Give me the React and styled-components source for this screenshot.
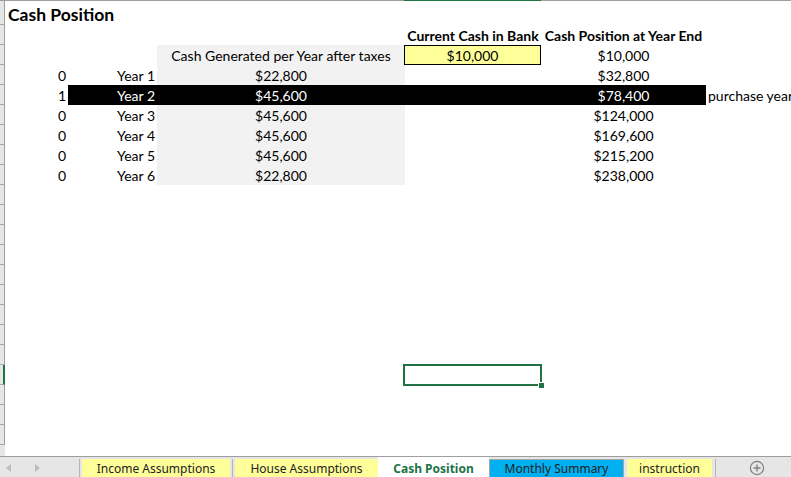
import React from 'react';
import styled, { createGlobalStyle, css } from 'styled-components';

const CELL_FONT = `Lato, "Liberation Sans", Arial, sans-serif`;
const UI_FONT = `"Noto Sans", "Open Sans", "Liberation Sans", sans-serif`;
const GREEN = '#217346';

const Global = createGlobalStyle`
  html, body { margin: 0; padding: 0; background: #fff; overflow: hidden; }
  #root { width: 791px; height: 477px; }
`;

const Window = styled.div`
  width: 791px;
  height: 477px;
  display: flex;
  flex-direction: column;
  overflow: hidden;
  background: #fff;
`;

const HeaderEdge = styled.div`
  display: flex;
  height: 1px;
  flex: none;
`;

const EdgeSeg = styled.div`
  background: ${(p) => (p.$active ? GREEN : '#9e9e9e')};
  ${(p) => (p.$w ? css`width: ${p.$w}px; flex: none;` : css`flex: 1;`)}
`;

const Body = styled.div`
  flex: 1;
  display: flex;
  min-height: 0;
`;

const RowHeads = styled.div`
  width: 5px;
  flex: none;
  display: flex;
  flex-direction: column;
  background: #e6e6e6;
`;

const RowHead = styled.div`
  height: ${(p) => p.$h}px;
  flex: none;
  box-sizing: border-box;
  border-bottom: 1px solid #a8a8a8;
  border-right: ${(p) => (p.$sel ? `2px solid ${GREEN}` : '1px solid #9e9e9e')};
`;

const Sheet = styled.div`
  flex: 1;
  display: grid;
  grid-template-columns: 63px 89px 248px 136px 165px 1fr;
  grid-template-rows: 24px repeat(21, 20px);
  align-content: start;
  overflow: hidden;
  font-family: ${CELL_FONT};
  font-size: 14px;
  color: #000;
`;

const Cell = styled.div`
  grid-column: ${(p) => p.$col};
  grid-row: ${(p) => p.$row};
  display: flex;
  align-items: center;
  justify-content: ${(p) => (p.$align === 'right' ? 'flex-end' : p.$align === 'left' ? 'flex-start' : 'center')};
  padding: 1px 2px 0;
  box-sizing: border-box;
  white-space: nowrap;
  background: ${(p) => p.$bg || 'transparent'};
  color: ${(p) => p.$color || '#000'};
  font-weight: ${(p) => (p.$bold ? 700 : 400)};
  min-width: 0;
  overflow: visible;
`;

const Title = styled.div`
  grid-column: 1 / 4;
  grid-row: 1;
  display: flex;
  align-items: center;
  padding: 2px 3px 0;
  font-weight: 700;
  font-size: 17.5px;
  white-space: nowrap;
`;

const InputCell = styled(Cell)`
  background: #ffff99;
  border: 1px solid #000;
  margin-left: -1px;
`;

const Selected = styled.div`
  grid-column: 4;
  grid-row: 19;
  position: relative;
  &::before {
    content: '';
    position: absolute;
    left: -2px;
    top: -1px;
    right: -1px;
    bottom: -1px;
    border: 2px solid ${GREEN};
  }
  &::after {
    content: '';
    position: absolute;
    right: -3px;
    bottom: -3px;
    width: 5px;
    height: 5px;
    background: ${GREEN};
    box-shadow: -1px -1px 0 #fff;
  }
`;

const TabBar = styled.div`
  height: 20px;
  flex: none;
  display: flex;
  align-items: flex-end;
  background: #e6e6e6;
  border-top: 1px solid #9e9e9e;
  font-family: ${UI_FONT};
  font-size: 12px;
`;

const Nav = styled.div`
  width: 79px;
  height: 18px;
  flex: none;
  display: flex;
  align-items: center;
  padding-left: 6px;
  gap: 24px;
  box-sizing: border-box;
`;

const Divider = styled.div`
  width: 1px;
  height: 18px;
  flex: none;
  background: #b4b4b4;
  margin: 0 ${(p) => p.$mr || 2}px 0 ${(p) => p.$ml || 0}px;
`;

const Tab = styled.div`
  width: ${(p) => p.$w}px;
  height: ${(p) => (p.$active ? 20 : 18)}px;
  flex: none;
  box-sizing: border-box;
  display: flex;
  align-items: center;
  justify-content: center;
  padding-top: ${(p) => (p.$active ? 3 : 1)}px;
  background: ${(p) => p.$bg};
  color: ${(p) => (p.$active ? GREEN : '#222')};
  font-weight: ${(p) => (p.$active ? 700 : 400)};
  margin-right: ${(p) => p.$mr || 0}px;
  ${(p) =>
    p.$boxed &&
    css`
      border-top: 1px solid #a6a6a6;
      border-left: 1px solid #a6a6a6;
      border-right: 1px solid #a6a6a6;
      padding-top: 0;
    `}
  white-space: nowrap;
`;

const PlusWrap = styled.div`
  height: 18px;
  display: flex;
  align-items: center;
  margin-left: 31px;
`;

const Arrow = ({ dir }) => (
  <svg width="5" height="8" viewBox="0 0 5 8">
    <polygon points={dir === 'left' ? '5,0 5,8 0,4' : '0,0 0,8 5,4'} fill="#bdbdbd" />
  </svg>
);

const PlusIcon = () => (
  <svg width="16" height="16" viewBox="0 0 16 16">
    <circle cx="8" cy="8" r="6.6" fill="none" stroke="#7f7f7f" strokeWidth="1.2" />
    <path d="M8 4.5v7M4.5 8h7" stroke="#7f7f7f" strokeWidth="1.4" />
  </svg>
);

const rows = [
  { a: '0', b: 'Year 1', c: '$22,800', e: '$32,800' },
  { a: '1', b: 'Year 2', c: '$45,600', e: '$78,400', dark: true, f: 'purchase year' },
  { a: '0', b: 'Year 3', c: '$45,600', e: '$124,000' },
  { a: '0', b: 'Year 4', c: '$45,600', e: '$169,600' },
  { a: '0', b: 'Year 5', c: '$45,600', e: '$215,200' },
  { a: '0', b: 'Year 6', c: '$22,800', e: '$238,000' },
];

export default function App() {
  const heads = [24, ...Array(21).fill(20)];
  return (
    <Window>
      <Global />
      <HeaderEdge>
        <EdgeSeg $w={404} />
        <EdgeSeg $w={137} $active />
        <EdgeSeg />
      </HeaderEdge>
      <Body>
        <RowHeads>
          {heads.map((h, i) => (
            <RowHead key={i} $h={h} $sel={i === 18} />
          ))}
        </RowHeads>
        <Sheet>
          <Title>Cash Position</Title>
          <Cell $col={4} $row={2} $bold>Current Cash in Bank</Cell>
          <Cell $col={5} $row={2} $bold>Cash Position at Year End</Cell>
          <Cell $col={3} $row={3} $bg="#f2f2f2">Cash Generated per Year after taxes</Cell>
          <InputCell $col={4} $row={3}>$10,000</InputCell>
          <Cell $col={5} $row={3}>$10,000</Cell>
          {rows.map((r, i) => {
            const row = i + 4;
            const bg = r.dark ? '#000' : undefined;
            const fg = r.dark ? '#fff' : undefined;
            return (
              <React.Fragment key={row}>
                <Cell $col={1} $row={row} $align="right">{r.a}</Cell>
                <Cell $col={2} $row={row} $align="right" $bg={bg} $color={fg}>{r.b}</Cell>
                <Cell $col={3} $row={row} $bg={r.dark ? '#000' : '#f2f2f2'} $color={fg}>{r.c}</Cell>
                <Cell $col={4} $row={row} $bg={bg} />
                <Cell $col={5} $row={row} $bg={bg} $color={fg}>{r.e}</Cell>
                {r.f && <Cell $col={6} $row={row} $align="left">{r.f}</Cell>}
              </React.Fragment>
            );
          })}
          <Selected />
        </Sheet>
      </Body>
      <TabBar>
        <Nav>
          <Arrow dir="left" />
          <Arrow dir="right" />
        </Nav>
        <Divider />
        <Tab $w={148} $bg="#ffff99" $mr={1}>Income Assumptions</Tab>
        <Divider $mr={2} $ml={1} />
        <Tab $w={143} $bg="#ffff99">House Assumptions</Tab>
        <Tab $w={111} $bg="#fff" $active>Cash Position</Tab>
        <Tab $w={135} $bg="#00b0f0" $boxed $mr={3}>Monthly Summary</Tab>
        <Tab $w={85} $bg="#ffff99" $mr={3}>instruction</Tab>
        <Divider $mr={0} />
        <PlusWrap>
          <PlusIcon />
        </PlusWrap>
      </TabBar>
    </Window>
  );
}
